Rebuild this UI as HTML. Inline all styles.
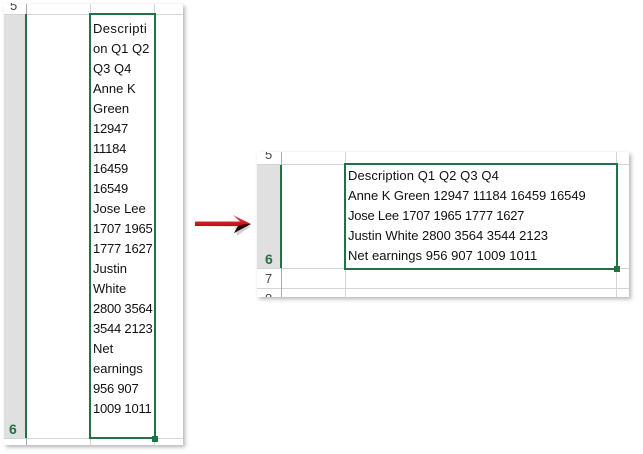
<!DOCTYPE html>
<html><head><meta charset="utf-8"><style>
html,body{margin:0;padding:0;background:#fff;width:643px;height:454px;overflow:hidden}
div{position:absolute;box-sizing:border-box}
.t{font:13px/20px "Liberation Sans",sans-serif;color:#111;white-space:nowrap}
.l{background:#d4d4d4}
.h{font-size:14px;color:#217346;font-weight:bold}
.d{letter-spacing:-.22px}
.e{letter-spacing:.4px}
</style></head><body>
<div style="left:4px;top:4px;width:179px;height:441px;background:#fff;box-shadow:2px 2px 4px rgba(0,0,0,.3)"></div>
<div style="left:4px;top:14px;width:22px;height:424px;background:#e0e0e0"></div>
<div class="l" style="left:4px;top:14px;width:179px;height:1px"></div>
<div class="l" style="left:4px;top:438px;width:179px;height:1px"></div>
<div class="l" style="left:26px;top:4px;width:1px;height:441px;background:#aaa"></div>
<div class="l" style="left:90px;top:4px;width:1px;height:441px"></div>
<div class="l" style="left:154px;top:4px;width:1px;height:441px"></div>
<div style="left:25px;top:14px;width:2px;height:424px;background:#217346"></div>
<div style="left:4px;top:3px;width:22px;height:11px;overflow:hidden"><div class="t" style="left:6px;top:-7px;color:#444">5</div></div>
<div class="t h" style="left:9px;top:419px">6</div>
<div style="left:89px;top:13px;width:67px;height:426px;border:2px solid #217346"></div>
<div style="left:152px;top:436px;width:6px;height:6px;background:#217346"></div>
<div class="t" style="left:93px;top:19px"><span class="e">Descripti</span><br>on Q1 Q2<br>Q3 Q4<br>Anne K<br>Green<br><span class="d">12947</span><br><span class="d">11184</span><br><span class="d">16459</span><br><span class="d">16549</span><br>Jose Lee<br><span class="d">1707 1965</span><br><span class="d">1777 1627</span><br>Justin<br>White<br><span class="d">2800 3564</span><br><span class="d">3544 2123</span><br>Net<br>earnings<br><span class="d">956 907</span><br><span class="d">1009 1011</span></div>

<svg style="position:absolute;left:193px;top:211px" width="62" height="28" viewBox="0 0 62 28">
<defs><linearGradient id="g" x1="0" y1="0" x2="0" y2="1"><stop offset="0" stop-color="#e8505c"/><stop offset=".5" stop-color="#c8141e"/><stop offset="1" stop-color="#8a0c12"/></linearGradient></defs>
<path d="M3 16 H42 L44 25 L58 15Z" fill="#999" opacity=".45"/>
<path d="M2 10.5 H47 L40 4 L58 13 L41 22 L45 15 H2Z" fill="url(#g)"/>
<path d="M45 15 L41 22 L58 13 L50 13.5Z" fill="#2a0606"/>
</svg>

<div style="left:257px;top:152px;width:372px;height:145px;background:#fff;box-shadow:2px 2px 4px rgba(0,0,0,.3)"></div>
<div style="left:257px;top:165px;width:24px;height:103px;background:#e0e0e0"></div>
<div class="l" style="left:257px;top:164px;width:372px;height:1px"></div>
<div class="l" style="left:257px;top:268px;width:372px;height:1px"></div>
<div class="l" style="left:257px;top:288px;width:372px;height:1px"></div>
<div class="l" style="left:281px;top:152px;width:1px;height:145px;background:#aaa"></div>
<div class="l" style="left:345px;top:152px;width:1px;height:145px"></div>
<div class="l" style="left:616px;top:152px;width:1px;height:145px"></div>
<div style="left:280px;top:165px;width:2px;height:103px;background:#217346"></div>
<div style="left:257px;top:152px;width:24px;height:12px;overflow:hidden"><div class="t" style="left:8px;top:-7px;color:#444">5</div></div>
<div class="t h" style="left:265px;top:249px">6</div>
<div class="t" style="left:265px;top:269px;color:#444">7</div>
<div style="left:257px;top:289px;width:24px;height:8px;overflow:hidden"><div class="t" style="left:8px;top:0;color:#444">8</div></div>
<div style="left:344px;top:163px;width:274px;height:107px;border:2px solid #217346"></div>
<div style="left:614px;top:266px;width:6px;height:6px;background:#217346"></div>
<div class="t" style="left:348px;top:166px"><span style="letter-spacing:.09px">Description Q1 Q2 Q3 Q4</span><br><span style="letter-spacing:-.05px">Anne K Green 12947 11184 16459 16549</span><br><span style="letter-spacing:-.24px">Jose Lee 1707 1965 1777 1627</span><br><span style="letter-spacing:-.03px">Justin White 2800 3564 3544 2123</span><br><span style="letter-spacing:.03px">Net earnings 956 907 1009 1011</span></div>
</body></html>
